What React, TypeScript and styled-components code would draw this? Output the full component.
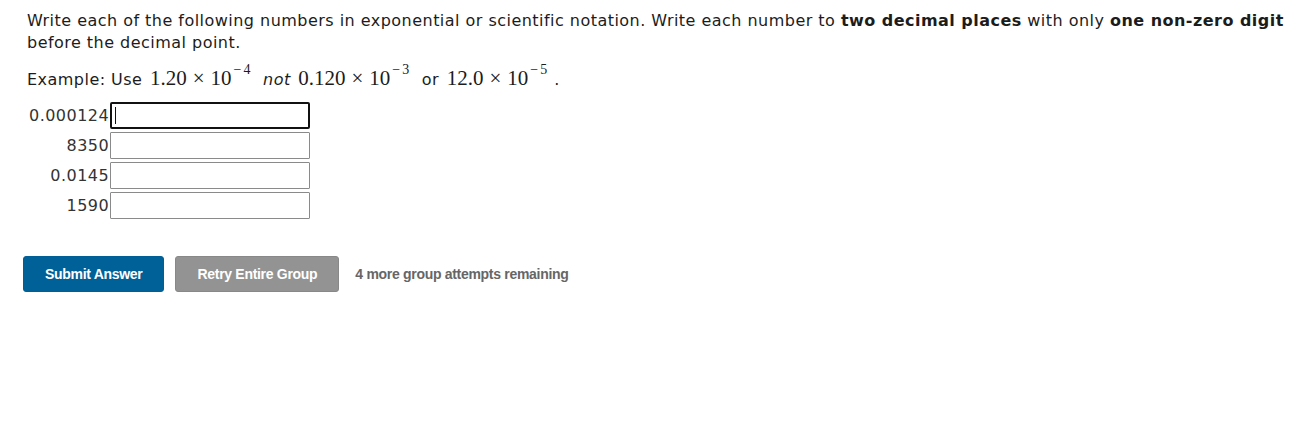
import React, { FC } from "react";
import styled, { createGlobalStyle } from "styled-components";

const GlobalStyle = createGlobalStyle`
  body {
    margin: 8px;
    background: #ffffff;
    font-family: "DejaVu Sans", Verdana, sans-serif;
  }
`;

const Wrapper = styled.div`
  padding: 2px 15px 0;
`;

const Question = styled.div`
  padding-left: 4px;
  color: #1c1c1c;
  font-size: 16px;
  letter-spacing: 0.47px;
  line-height: 22px;
`;

const Para = styled.p`
  margin: 0 0 13px;
`;

const Math = styled.span`
  font-family: "Liberation Serif", "Times New Roman", serif;
  font-size: 21px;
  letter-spacing: 0;
  white-space: nowrap;
  margin: 0 5px 0 2px;
`;

const Times = styled.span`
  margin: 0 6px;
`;

const Sup = styled.sup`
  font-size: 14px;
  letter-spacing: 2px;
  vertical-align: 11px;
  line-height: 0;
  margin-left: 2px;
`;

const Grid = styled.div`
  display: grid;
  grid-template-columns: auto 200px;
  justify-content: start;
  justify-items: end;
  row-gap: 3px;
  margin-top: -2px;
`;

const Label = styled.label`
  align-self: center;
  color: #333333;
  padding: 0 1px 0 2px;
`;

const Field = styled.input<{ $focused?: boolean }>`
  box-sizing: border-box;
  width: 200px;
  height: 27px;
  justify-self: start;
  margin: 0;
  padding: 0 4px;
  font-family: "DejaVu Sans", sans-serif;
  font-size: 15px;
  background: #fff;
  border: ${(p) => (p.$focused ? "2px solid #111111" : "1px solid #8a8a8a")};
  border-radius: ${(p) => (p.$focused ? "2px" : "1px")};
  outline: none;
`;

const Caret = styled.div`
  position: relative;
`;

const CaretLine = styled.span`
  position: absolute;
  left: 5px;
  top: 5px;
  width: 1px;
  height: 17px;
  background: #111;
`;

const Actions = styled.div`
  display: flex;
  align-items: center;
  margin-top: 37px;
`;

const Button = styled.button<{ $variant: "primary" | "muted" }>`
  height: 36px;
  padding: 0 21px;
  margin-right: 11px;
  border: 1px solid ${(p) => (p.$variant === "primary" ? "#005f96" : "#888888")};
  border-radius: 3px;
  background: ${(p) => (p.$variant === "primary" ? "#006098" : "#939393")};
  color: #ffffff;
  font-family: "Liberation Sans", Arial, sans-serif;
  font-weight: bold;
  font-size: 14px;
  letter-spacing: -0.3px;
`;

const Status = styled.span`
  margin-left: 5px;
  color: #666666;
  font-family: "Liberation Sans", Arial, sans-serif;
  font-weight: bold;
  font-size: 14px;
  letter-spacing: -0.3px;
`;

const rows = ["0.000124", "8350", "0.0145", "1590"];

const Sci: FC<{ m: string; e: string }> = ({ m, e }) => (
  <Math>
    {m}
    <Times>×</Times>10<Sup>−{e}</Sup>
  </Math>
);

const App: FC = () => {
  return (
    <Wrapper>
      <GlobalStyle />
      <Question>
        <Para>
          Write each of the following numbers in exponential or scientific
          notation. Write each number to <b>two decimal places</b> with only{" "}
          <b>one non-zero digit</b>
          <br />
          before the decimal point.
        </Para>
        <Para>
          Example: Use <Sci m="1.20" e="4" /> <i>not</i>{" "}
          <Sci m="0.120" e="3" /> or <Sci m="12.0" e="5" />.
        </Para>
        <Grid>
          {rows.map((r, i) => (
            <React.Fragment key={r}>
              <Label>{r}</Label>
              {i === 0 ? (
                <Caret>
                  <Field $focused aria-label={r} />
                  <CaretLine />
                </Caret>
              ) : (
                <Field aria-label={r} />
              )}
            </React.Fragment>
          ))}
        </Grid>
      </Question>
      <Actions>
        <Button $variant="primary">Submit Answer</Button>
        <Button $variant="muted">Retry Entire Group</Button>
        <Status>4 more group attempts remaining</Status>
      </Actions>
    </Wrapper>
  );
};

export default App;
